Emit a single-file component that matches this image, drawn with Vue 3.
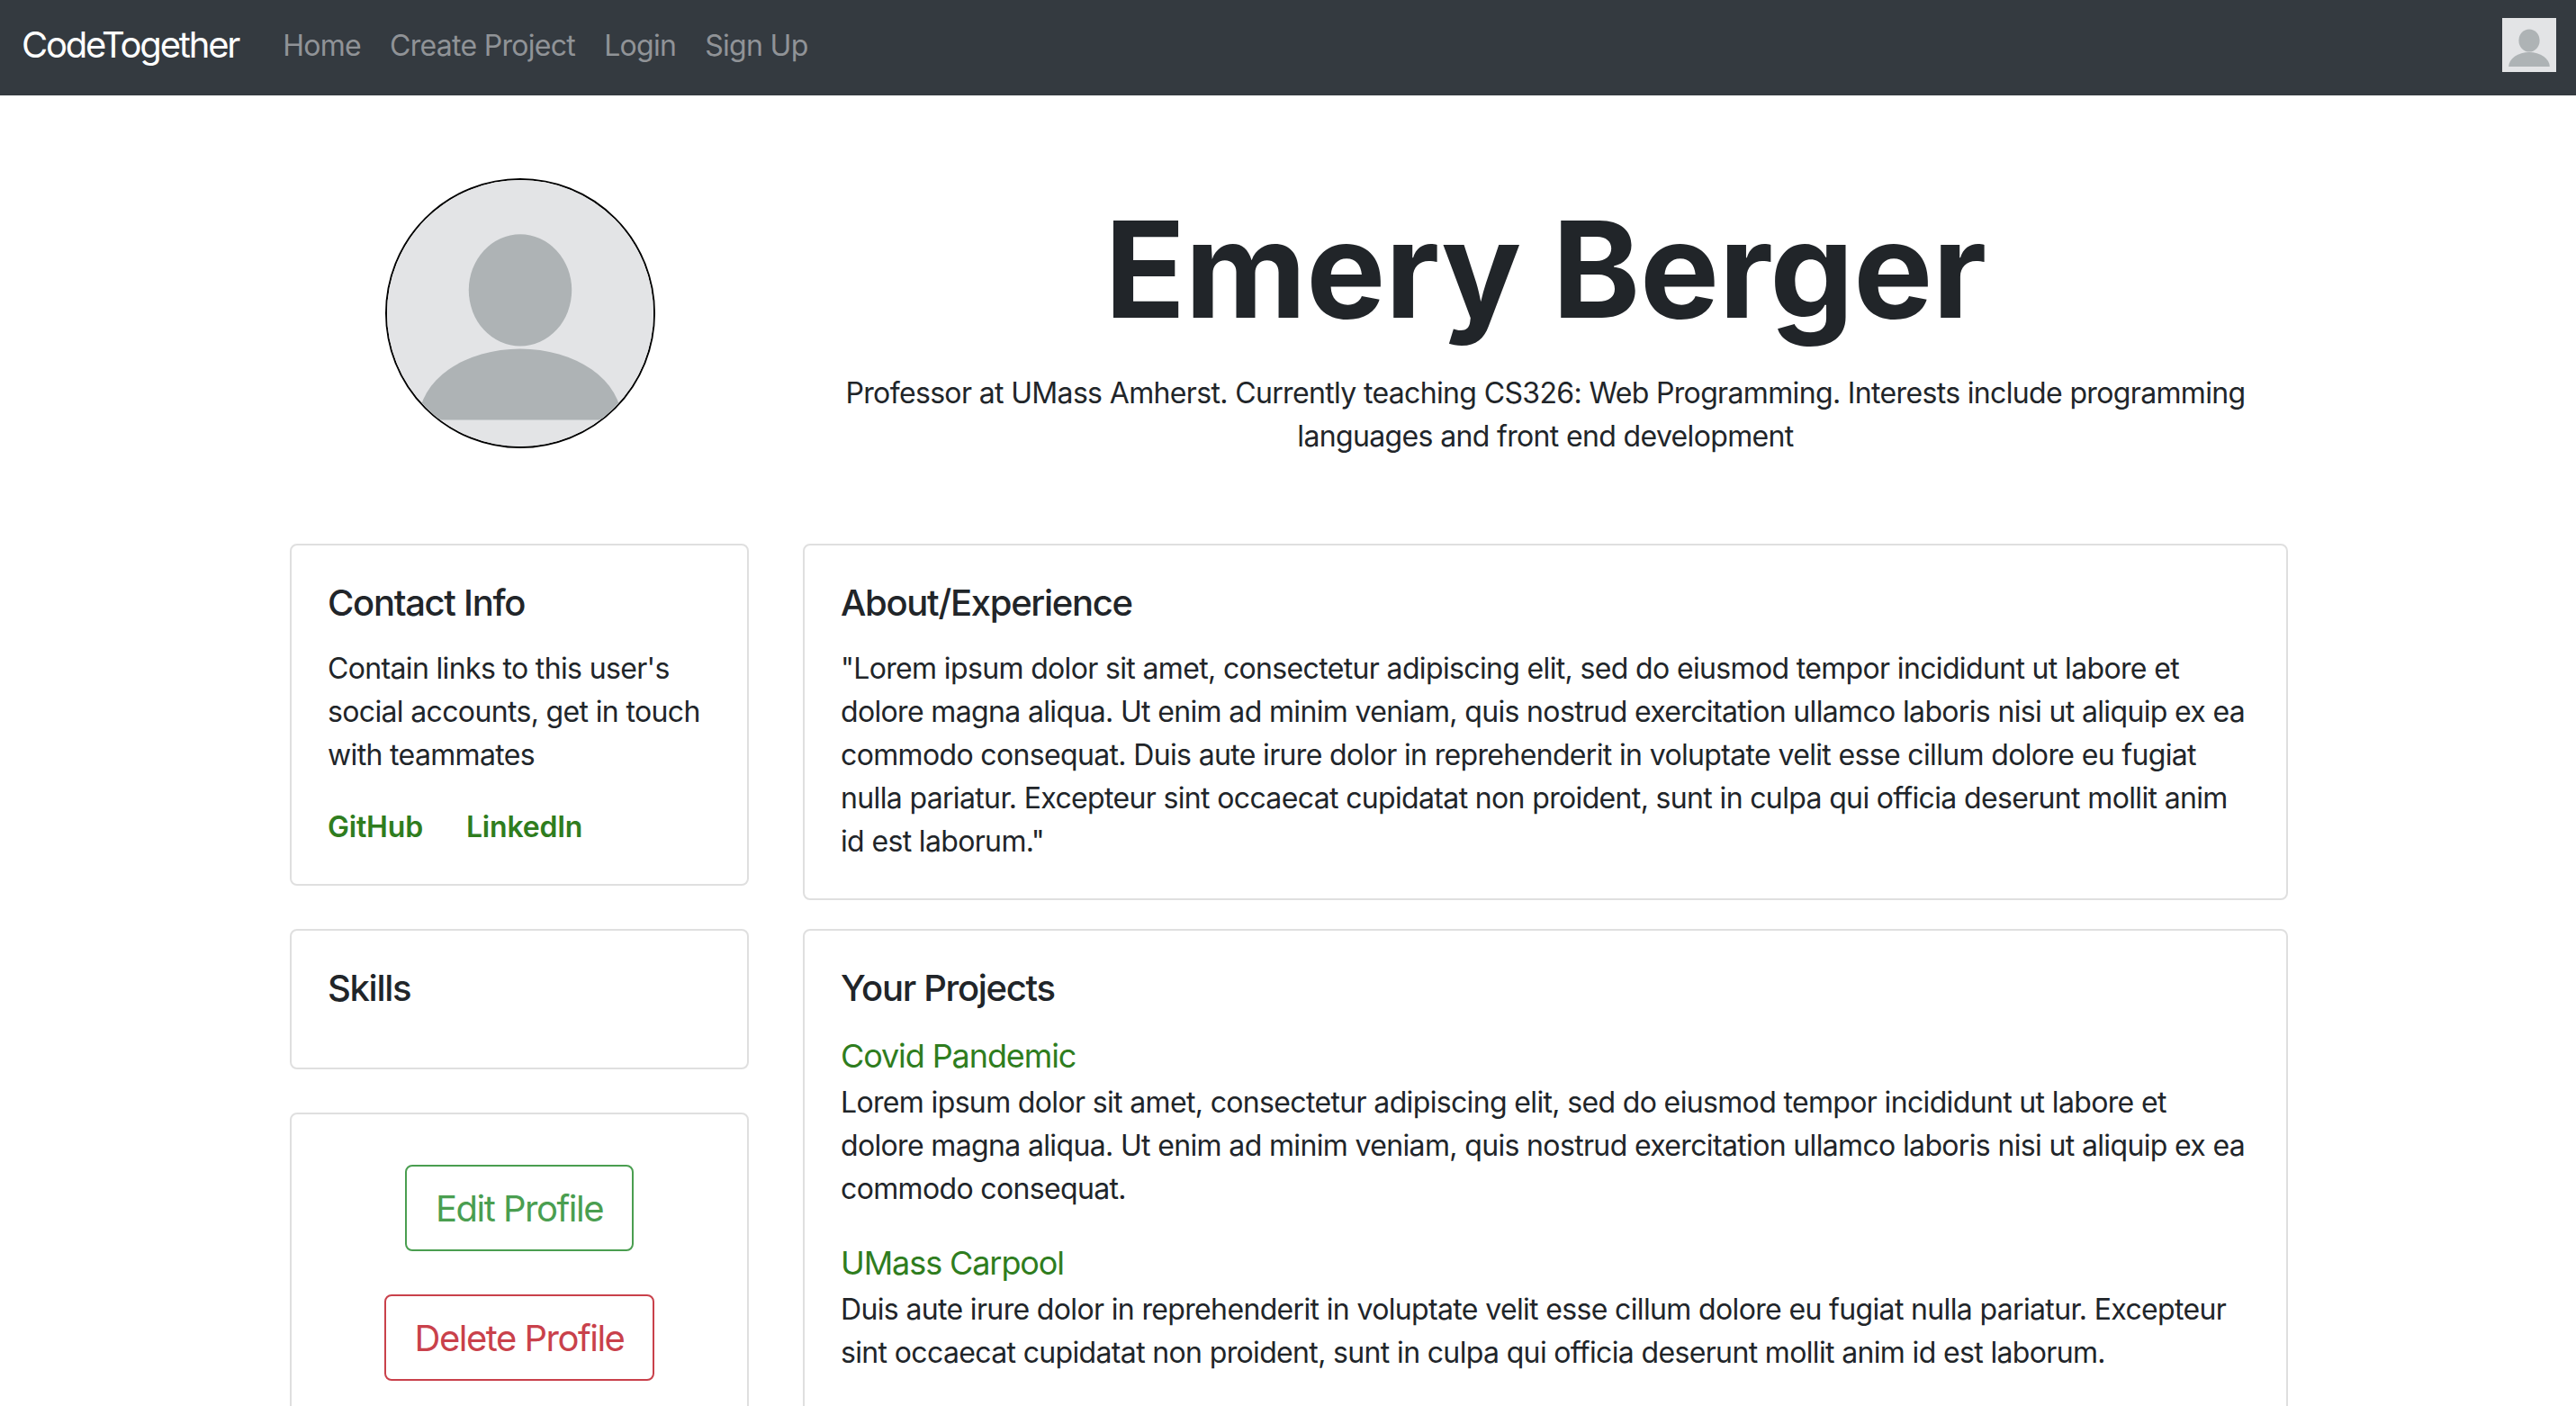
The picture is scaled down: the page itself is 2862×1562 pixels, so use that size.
<script setup>
const aboutText = '"Lorem ipsum dolor sit amet, consectetur adipiscing elit, sed do eiusmod tempor incididunt ut labore et dolore magna aliqua. Ut enim ad minim veniam, quis nostrud exercitation ullamco laboris nisi ut aliquip ex ea commodo consequat. Duis aute irure dolor in reprehenderit in voluptate velit esse cillum dolore eu fugiat nulla pariatur. Excepteur sint occaecat cupidatat non proident, sunt in culpa qui officia deserunt mollit anim id est laborum."'

const projects = [
  {
    name: 'Covid Pandemic',
    text: 'Lorem ipsum dolor sit amet, consectetur adipiscing elit, sed do eiusmod tempor incididunt ut labore et dolore magna aliqua. Ut enim ad minim veniam, quis nostrud exercitation ullamco laboris nisi ut aliquip ex ea commodo consequat.'
  },
  {
    name: 'UMass Carpool',
    text: 'Duis aute irure dolor in reprehenderit in voluptate velit esse cillum dolore eu fugiat nulla pariatur. Excepteur sint occaecat cupidatat non proident, sunt in culpa qui officia deserunt mollit anim id est laborum.'
  }
]
</script>

<template>
  <nav class="navbar">
    <a class="brand" href="#">CodeTogether</a>
    <div class="nav-links">
      <a href="#">Home</a>
      <a href="#">Create Project</a>
      <a href="#">Login</a>
      <a href="#">Sign Up</a>
    </div>
    <svg class="nav-avatar" viewBox="0 0 300 300">
      <rect width="300" height="300" fill="#e3e4e6" />
      <ellipse cx="150" cy="125" rx="58" ry="63" fill="#aeb3b5" />
      <path d="M36 270a114 80 0 0 1 228 0z" fill="#aeb3b5" />
    </svg>
  </nav>

  <main class="container">
    <header class="profile-head">
      <div class="side">
        <svg class="avatar" viewBox="0 0 300 300">
          <rect width="300" height="300" fill="#e3e4e6" />
          <ellipse cx="150" cy="124" rx="58" ry="63" fill="#aeb3b5" />
          <path d="M36 270a114 80 0 0 1 228 0z" fill="#aeb3b5" />
        </svg>
      </div>
      <div class="intro">
        <h1>Emery Berger</h1>
        <p>Professor at UMass Amherst. Currently teaching CS326: Web Programming. Interests include programming languages and front end development</p>
      </div>
    </header>

    <div class="columns">
      <aside class="side-col">
        <section class="card">
          <h5>Contact Info</h5>
          <p>Contain links to this user's social accounts, get in touch with teammates</p>
          <div class="social">
            <a href="#">GitHub</a>
            <a href="#">LinkedIn</a>
          </div>
        </section>
        <section class="card skills">
          <h5>Skills</h5>
        </section>
        <section class="card actions">
          <button class="btn edit">Edit Profile</button>
          <button class="btn delete">Delete Profile</button>
        </section>
      </aside>

      <div class="main-col">
        <section class="card">
          <h5>About/Experience</h5>
          <p class="flush">{{ aboutText }}</p>
        </section>
        <section class="card">
          <h5>Your Projects</h5>
          <div v-for="project in projects" :key="project.name" class="project">
            <a class="project-name" href="#">{{ project.name }}</a>
            <p>{{ project.text }}</p>
          </div>
        </section>
      </div>
    </div>
  </main>
</template>

<style>
html, body {
  overflow: hidden;
  background: #fff;
}
</style>

<style scoped>
.navbar {
  height: 106px;
  box-sizing: border-box;
  padding: 20px 22px 0 24px;
  background: #343a40;
  display: flex;
  align-items: flex-start;
  font-family: Inter, "Liberation Sans", sans-serif;
}
.brand {
  color: #fff;
  font-size: 40px;
  line-height: 60px;
  letter-spacing: -2.2px;
  text-decoration: none;
  margin-right: 49px;
}
.nav-links {
  display: flex;
  gap: 32px;
}
.nav-links a {
  color: #909397;
  font-size: 32px;
  line-height: 62px;
  letter-spacing: -0.7px;
  text-decoration: none;
}
.nav-avatar {
  width: 60px;
  height: 60px;
  margin-left: auto;
}

.container {
  width: 2280px;
  margin: 0 auto;
  padding: 92px 0 0 2px;
  color: #212529;
  font-family: Inter, "Liberation Sans", sans-serif;
  font-size: 32px;
  line-height: 48px;
  letter-spacing: -0.65px;
}
.profile-head {
  display: flex;
  height: 406px;
}
.side {
  width: 570px;
  box-sizing: border-box;
  padding-left: 2px;
  display: flex;
  justify-content: center;
  align-items: flex-start;
}
.avatar {
  width: 300px;
  height: 300px;
  box-sizing: border-box;
  border: 2px solid #000;
  border-radius: 50%;
}
.intro {
  width: 1710px;
  box-sizing: border-box;
  padding: 6px 30px 0;
  text-align: center;
}
.intro h1 {
  margin: 0 0 17px;
  font-size: 148px;
  line-height: 192px;
  font-weight: 700;
  letter-spacing: -0.4px;
}
.intro p {
  margin: 0;
}

.columns {
  display: flex;
}
.side-col {
  width: 570px;
  box-sizing: border-box;
  padding: 0 30px;
}
.main-col {
  width: 1710px;
  box-sizing: border-box;
  padding: 0 30px;
}
.card {
  border: 2px solid rgba(0, 0, 0, 0.125);
  border-radius: 8px;
  padding: 40px;
}
.side-col .card {
  margin-bottom: 48px;
}
.main-col .card {
  margin-bottom: 32px;
}
.card h5 {
  margin: 0 0 24px;
  font-size: 40px;
  line-height: 48px;
  font-weight: 500;
  letter-spacing: -1.3px;
}
.card p {
  margin: 0 0 31px;
  padding-top: 1px;
}
.card p.flush {
  margin: 0 0 -1px;
}
.skills {
  height: 156px;
  box-sizing: border-box;
}
.social {
  display: flex;
  gap: 48px;
  padding-top: 1px;
  margin-bottom: -1px;
}
.social a {
  color: #2f7d1e;
  font-weight: 600;
  letter-spacing: -0.2px;
  text-decoration: none;
}
.actions {
  display: flex;
  flex-direction: column;
  align-items: center;
  gap: 48px;
  padding-top: 56px;
  padding-bottom: 56px;
}
.btn {
  height: 96px;
  padding: 2px 32px 0;
  background: #fff;
  border: 2px solid;
  border-radius: 8px;
  font-family: inherit;
  font-size: 40px;
  line-height: 60px;
  letter-spacing: -1.5px;
}
.edit {
  color: #4a9e50;
  border-color: #4a9e50;
}
.delete {
  color: #c9414b;
  border-color: #c9414b;
}
.project-name {
  display: block;
  color: #2f7d1e;
  font-size: 36px;
  line-height: 54px;
  letter-spacing: -1.1px;
  text-decoration: none;
}
</style>
